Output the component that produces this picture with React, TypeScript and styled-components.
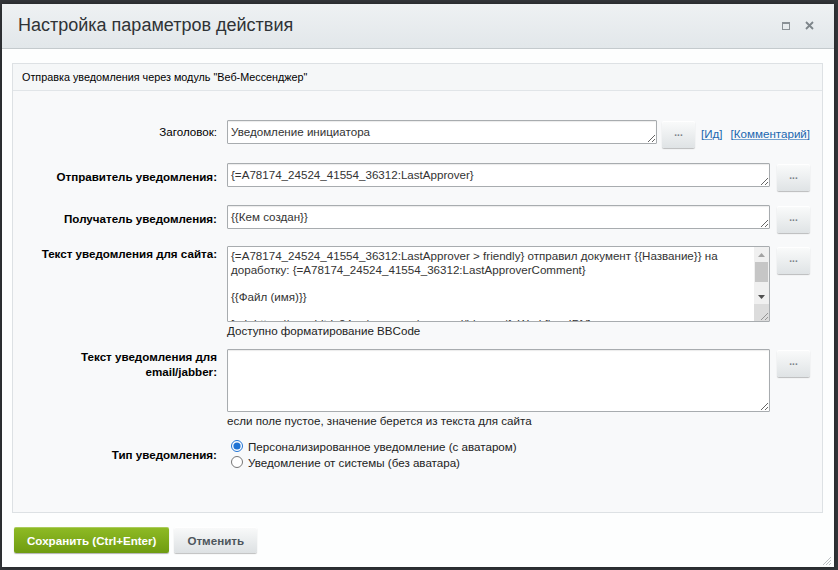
import React from 'react';
import styled, { createGlobalStyle } from 'styled-components';

// == styles =======================================================================================
const GlobalStyle = createGlobalStyle`
  html, body {
    margin: 0;
    padding: 0;
    background: #34373b;
  }

  body {
    font-family: "Liberation Sans", Arial, sans-serif;
    font-size: 11.6px;
    color: #000;
  }

  * {
    box-sizing: border-box;
  }
`;

const Page = styled.div`
  width: 838px;
  height: 570px;
  padding: 4px 4px 3px 2px;
  background: #34373b;
`;

const Dialog = styled.div`
  position: relative;
  display: flex;
  flex-direction: column;
  width: 832px;
  height: 563px;
  background: #fdfefe;
  box-shadow: 0 0 6px rgba( 0, 0, 0, 0.4 );
`;

const TitleBar = styled.div`
  display: flex;
  align-items: center;
  height: 45px;
  padding: 0 20px 1px 16px;
  background: linear-gradient( #eef1f3, #e2e7ea );
  border-bottom: 1px solid #c4cacd;
`;

const Title = styled.div`
  flex: 1;
  font-size: 18px;
  color: #2f3336;
`;

const TitleIcons = styled.div`
  display: flex;
  align-items: center;
  gap: 15px;
`;

const Body = styled.div`
  padding: 14px 11px 0 10px;
`;

const Panel = styled.div`
  border: 1px solid #dde1e4;
  background: #f8f9fa;
`;

const PanelHeader = styled.div`
  height: 27px;
  padding: 0 0 0 9px;
  line-height: 26px;
  font-size: 10.8px;
  background: #f5f7f8;
  border-bottom: 1px solid #e1e5e8;
`;

const Form = styled.div`
  display: flex;
  flex-direction: column;
  padding: 29px 0 42px;
`;

const Row = styled.div<{ $mt: number; $center?: boolean }>`
  display: flex;
  align-items: ${ ( p ) => ( p.$center ? 'center' : 'flex-start' ) };
  margin-top: ${ ( p ) => p.$mt }px;
`;

const Label = styled.div<{ $bold?: boolean; $pt: number }>`
  flex: none;
  width: 214px;
  padding: ${ ( p ) => p.$pt }px 10px 0 0;
  text-align: right;
  line-height: 15px;
  font-weight: ${ ( p ) => ( p.$bold ? 'bold' : 'normal' ) };
  color: #000;
`;

const Field = styled.div<{ $w: number }>`
  display: flex;
  flex-direction: column;
  flex: none;
  width: ${ ( p ) => p.$w }px;
`;

const TextInput = styled.textarea<{ $h: number }>`
  display: block;
  width: 100%;
  height: ${ ( p ) => p.$h }px;
  margin: 0;
  padding: 4px 3px;
  font-family: "Liberation Sans", Arial, sans-serif;
  font-size: 11.6px;
  line-height: 14px;
  color: #333;
  background: #fff;
  border: 1px solid #a8acaf;
  border-radius: 1px;
  box-shadow: inset 0 1px 1px rgba( 0, 0, 0, 0.08 );
  overflow: hidden;
  resize: both;
  outline: none;
`;

const ScrollArea = styled.div`
  display: flex;
  height: 76px;
  background: #fff;
  border: 1px solid #a8acaf;
  border-radius: 1px;
`;

const ScrollText = styled.div`
  flex: 1;
  padding: 2px 3px;
  overflow: hidden;
  white-space: pre;
  font-size: 11.6px;
  line-height: 13.5px;
  color: #333;
`;

const ScrollBar = styled.div`
  display: flex;
  flex-direction: column;
  flex: none;
  width: 15px;
  background: #f0f0f0;
`;

const ScrollButton = styled.div`
  display: flex;
  align-items: center;
  justify-content: center;
  height: 15px;
`;

const ScrollThumb = styled.div`
  height: 20px;
  margin: 0 1px;
  background: #c6c6c6;
`;

const ScrollTrack = styled.div`
  flex: 1;
`;

const ScrollCorner = styled.div`
  display: flex;
  align-items: flex-end;
  justify-content: flex-end;
  height: 17px;
  padding: 0 1px 1px 0;
  background: #dcdcdc;
`;

const Hint = styled.div`
  height: 16px;
  padding-top: 1px;
  line-height: 15px;
  color: #222;
`;

const DotsButton = styled.button<{ $ml: number }>`
  flex: none;
  width: 33px;
  height: 27px;
  margin: 1px 0 0 ${ ( p ) => p.$ml }px;
  padding: 0 0 4px;
  font-family: "Liberation Sans", Arial, sans-serif;
  font-size: 10px;
  font-weight: bold;
  color: #7a8287;
  background: linear-gradient( #fafbfb, #dfe3e5 );
  border: none;
  border-radius: 2px;
  box-shadow: 0 1px 1px rgba( 0, 0, 0, 0.25 ), inset 0 1px 0 #fff;
  cursor: pointer;
`;

const Links = styled.div`
  display: flex;
  gap: 8px;
  margin: 6px 0 0 6px;
  line-height: 15px;
  color: #2067b0;
`;

const Link = styled.a`
  color: #2067b0;
  text-decoration: underline;
  text-decoration-color: rgba( 32, 103, 176, 0.6 );
  cursor: pointer;
`;

const RadioList = styled.div`
  display: flex;
  flex-direction: column;
`;

const RadioLine = styled.label`
  display: flex;
  align-items: center;
  height: 16px;
  color: #222;
`;

const Radio = styled.input`
  width: 12px;
  height: 12px;
  margin: 0 5px 0 4px;
  accent-color: #1f73d4;
`;

const Footer = styled.div`
  display: flex;
  gap: 5px;
  padding: 14px 0 0 12px;
`;

const FooterButton = styled.button<{ $primary?: boolean }>`
  height: 26px;
  padding: 0 13px;
  font-family: "Liberation Sans", Arial, sans-serif;
  font-size: 11.6px;
  font-weight: bold;
  color: ${ ( p ) => ( p.$primary ? '#fff' : '#4e565c' ) };
  background: ${ ( p ) => ( p.$primary
    ? 'linear-gradient( #8fbb25, #6f9c11 )'
    : 'linear-gradient( #f9fafa, #dde1e3 )' ) };
  border: none;
  border-radius: 2px;
  box-shadow: ${ ( p ) => ( p.$primary
    ? '0 1px 1px rgba( 0, 0, 0, 0.3 ), inset 0 1px 0 rgba( 255, 255, 255, 0.25 )'
    : '0 1px 1px rgba( 0, 0, 0, 0.25 ), inset 0 1px 0 #fff' ) };
  cursor: pointer;
`;

const Grip = styled.svg`
  position: absolute;
  right: 3px;
  bottom: 2px;
`;

// == data =========================================================================================
const siteText = [
  '{=A78174_24524_41554_36312:LastApprover > friendly} отправил документ {{Название}} на',
  'доработку: {=A78174_24524_41554_36312:LastApproverComment}',
  '',
  '{{Файл (имя)}}',
  '',
  '[url=https://corp.bitrix24.ru/company/personal/bizproc/{=Workflow:ID}/]',
].join( '\n' );

// == element ======================================================================================
const App = (): JSX.Element => (
  <Page>
    <GlobalStyle />
    <Dialog>
      <TitleBar>
        <Title>Настройка параметров действия</Title>
        <TitleIcons>
          <svg width="8" height="8" viewBox="0 0 8 8">
            <rect x="0.5" y="0.5" width="7" height="7" fill="none" stroke="#8a9196" />
            <line x1="0" y1="1.5" x2="8" y2="1.5" stroke="#8a9196" />
          </svg>
          <svg width="9" height="9" viewBox="0 0 9 9">
            <path d="M1 1 L8 8 M8 1 L1 8" stroke="#7d858a" strokeWidth="1.8" />
          </svg>
        </TitleIcons>
      </TitleBar>

      <Body>
        <Panel>
          <PanelHeader>Отправка уведомления через модуль "Веб-Мессенджер"</PanelHeader>
          <Form>
            <Row $mt={ 0 }>
              <Label $pt={ 4 }>Заголовок:</Label>
              <Field $w={ 430 }>
                <TextInput $h={ 24 } defaultValue="Уведомление инициатора" />
              </Field>
              <DotsButton $ml={ 5 }>...</DotsButton>
              <Links>
                <span>[<Link>Ид</Link>]</span>
                <span>[<Link>Комментарий</Link>]</span>
              </Links>
            </Row>

            <Row $mt={ 15 }>
              <Label $bold $pt={ 6 }>Отправитель уведомления:</Label>
              <Field $w={ 543 }>
                <TextInput $h={ 24 } defaultValue="{=A78174_24524_41554_36312:LastApprover}" />
              </Field>
              <DotsButton $ml={ 7 }>...</DotsButton>
            </Row>

            <Row $mt={ 14 }>
              <Label $bold $pt={ 6 }>Получатель уведомления:</Label>
              <Field $w={ 543 }>
                <TextInput $h={ 24 } defaultValue="{{Кем создан}}" />
              </Field>
              <DotsButton $ml={ 7 }>...</DotsButton>
            </Row>

            <Row $mt={ 13 }>
              <Label $bold $pt={ 0 }>Текст уведомления для сайта:</Label>
              <Field $w={ 543 }>
                <ScrollArea>
                  <ScrollText>{ siteText }</ScrollText>
                  <ScrollBar>
                    <ScrollButton>
                      <svg width="7" height="4" viewBox="0 0 7 4"><path d="M0 4 L3.5 0 L7 4 Z" fill="#a3a3a3" /></svg>
                    </ScrollButton>
                    <ScrollThumb />
                    <ScrollTrack />
                    <ScrollButton>
                      <svg width="7" height="4" viewBox="0 0 7 4"><path d="M0 0 L3.5 4 L7 0 Z" fill="#505050" /></svg>
                    </ScrollButton>
                    <ScrollCorner>
                      <svg width="9" height="9" viewBox="0 0 9 9">
                        <path d="M9 2 L2 9 M9 6 L6 9" stroke="#8c8c8c" strokeWidth="0.9" />
                      </svg>
                    </ScrollCorner>
                  </ScrollBar>
                </ScrollArea>
                <Hint>Доступно форматирование BBCode</Hint>
              </Field>
              <DotsButton $ml={ 7 }>...</DotsButton>
            </Row>

            <Row $mt={ 11 }>
              <Label $bold $pt={ 0 }>Текст уведомления для<br />email/jabber:</Label>
              <Field $w={ 543 }>
                <TextInput $h={ 63 } defaultValue="" />
                <Hint>если поле пустое, значение берется из текста для сайта</Hint>
              </Field>
              <DotsButton $ml={ 7 }>...</DotsButton>
            </Row>

            <Row $mt={ 10 } $center>
              <Label $bold $pt={ 0 }>Тип уведомления:</Label>
              <RadioList>
                <RadioLine>
                  <Radio type="radio" name="notifyType" defaultChecked />
                  Персонализированное уведомление (с аватаром)
                </RadioLine>
                <RadioLine>
                  <Radio type="radio" name="notifyType" />
                  Уведомление от системы (без аватара)
                </RadioLine>
              </RadioList>
            </Row>
          </Form>
        </Panel>
      </Body>

      <Footer>
        <FooterButton $primary>Сохранить (Ctrl+Enter)</FooterButton>
        <FooterButton>Отменить</FooterButton>
      </Footer>

      <Grip width="10" height="10" viewBox="0 0 10 10">
        <path d="M10 2 L2 10 M10 5 L5 10 M10 8 L8 10" stroke="#b5babd" strokeWidth="0.9" />
      </Grip>
    </Dialog>
  </Page>
);

export default App;
